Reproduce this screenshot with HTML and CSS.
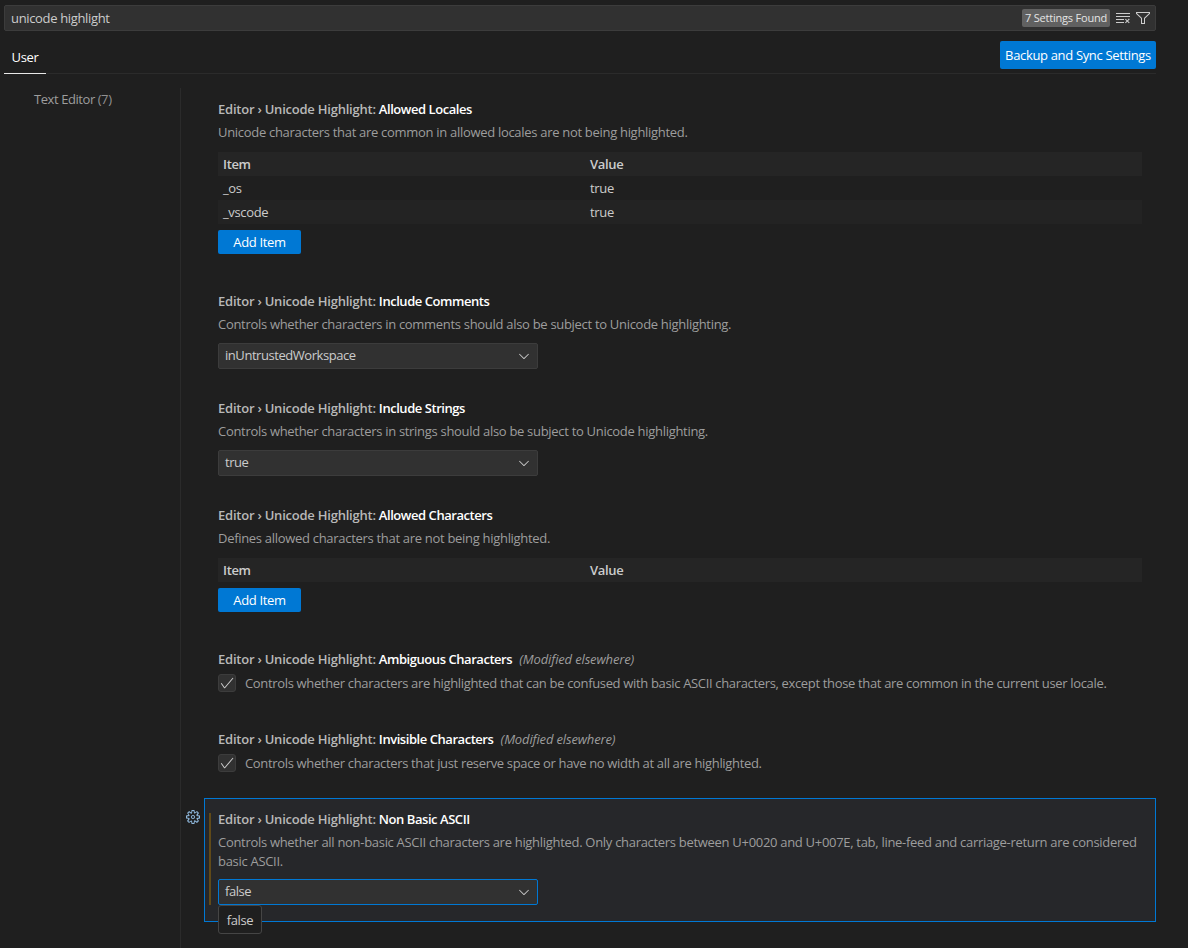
FILE: index.html
```html
<!DOCTYPE html>
<html lang="en">
<head>
    <meta charset="UTF-8">
    <title>Settings</title>
    <link rel="stylesheet" href="styles.css">
</head>
<body>
    <div class="search-box">
        <span class="search-text">unicode highlight</span>
        <span class="count-badge">7 Settings Found</span>
        <svg class="search-icon" viewBox="0 0 16 16"><path d="M10 12.6l.7.7 1.6-1.6 1.6 1.6.8-.7L13 11l1.7-1.6-.8-.8-1.6 1.7-1.6-1.6-.7.7 1.6 1.6-1.6 1.6zM1 4h14V3H1v1zm0 3h14V6H1v1zm8 2.5V9H1v1h8v-.5zM9 13v-1H1v1h8z"/></svg>
        <svg class="search-icon" viewBox="0 0 16 16"><path d="M15 2v1.67l-5 4.759V14H6V8.429l-5-4.76V2h14zM7 8v5h2V8l5-4.76V3H2v.24L7 8z"/></svg>
    </div>

    <div class="tabs">
        <div class="tab">User</div>
        <button class="sync-btn">Backup and Sync Settings</button>
    </div>

    <div class="content">
        <div class="toc">Text Editor <span class="toc-count">(7)</span></div>
        <div class="settings">

            <div class="setting setting-list">
                <div class="setting-title">Editor › Unicode Highlight: <b>Allowed Locales</b></div>
                <div class="setting-desc">Unicode characters that are common in allowed locales are not being highlighted.</div>
                <div class="list-row list-head"><span class="list-key">Item</span><span>Value</span></div>
                <div class="list-row"><span class="list-key">_os</span><span>true</span></div>
                <div class="list-row list-row-alt"><span class="list-key">_vscode</span><span>true</span></div>
                <button class="add-btn">Add Item</button>
            </div>

            <div class="setting">
                <div class="setting-title">Editor › Unicode Highlight: <b>Include Comments</b></div>
                <div class="setting-desc">Controls whether characters in comments should also be subject to Unicode highlighting.</div>
                <div class="select">
                    <span>inUntrustedWorkspace</span>
                    <svg class="chevron" viewBox="0 0 16 16"><path d="M7.976 10.072l4.357-4.357.62.618L8.284 11h-.618L3 6.333l.619-.618 4.357 4.357z"/></svg>
                </div>
            </div>

            <div class="setting">
                <div class="setting-title">Editor › Unicode Highlight: <b>Include Strings</b></div>
                <div class="setting-desc">Controls whether characters in strings should also be subject to Unicode highlighting.</div>
                <div class="select">
                    <span>true</span>
                    <svg class="chevron" viewBox="0 0 16 16"><path d="M7.976 10.072l4.357-4.357.62.618L8.284 11h-.618L3 6.333l.619-.618 4.357 4.357z"/></svg>
                </div>
            </div>

            <div class="setting setting-list">
                <div class="setting-title">Editor › Unicode Highlight: <b>Allowed Characters</b></div>
                <div class="setting-desc">Defines allowed characters that are not being highlighted.</div>
                <div class="list-row list-head"><span class="list-key">Item</span><span>Value</span></div>
                <button class="add-btn">Add Item</button>
            </div>

            <div class="setting setting-bool">
                <div class="setting-title">Editor › Unicode Highlight: <b>Ambiguous Characters</b> <i class="modified">(Modified elsewhere)</i></div>
                <div class="check-row">
                    <div class="checkbox"><svg viewBox="0 0 16 16"><path d="M14.431 3.323l-8.47 10-.79-.036-3.35-4.77.818-.574 2.978 4.24 8.051-9.506.764.646z"/></svg></div>
                    <div class="setting-desc">Controls whether characters are highlighted that can be confused with basic ASCII characters, except those that are common in the current user locale.</div>
                </div>
            </div>

            <div class="setting setting-bool">
                <div class="setting-title">Editor › Unicode Highlight: <b>Invisible Characters</b> <i class="modified">(Modified elsewhere)</i></div>
                <div class="check-row">
                    <div class="checkbox"><svg viewBox="0 0 16 16"><path d="M14.431 3.323l-8.47 10-.79-.036-3.35-4.77.818-.574 2.978 4.24 8.051-9.506.764.646z"/></svg></div>
                    <div class="setting-desc">Controls whether characters that just reserve space or have no width at all are highlighted.</div>
                </div>
            </div>

            <div class="setting setting-focused">
                <svg class="gear" viewBox="0 0 16 16"><path fill-rule="evenodd" d="M9.1 4.4L8.6 2H7.4l-.5 2.4-.7.3-2-1.3-.9.8 1.3 2-.2.7-2.4.5v1.2l2.4.5.3.8-1.3 2 .8.8 2-1.3.8.3.4 2.3h1.2l.5-2.4.8-.3 2 1.3.8-.8-1.3-2 .3-.8 2.3-.4V7.4l-2.4-.5-.3-.8 1.3-2-.8-.8-2 1.3-.7-.2zM9.4 1l.5 2.4L12 2.1l2 2-1.4 2.1 2.4.4v2.8l-2.4.5L14 12l-2 2-2.1-1.4-.5 2.4H6.6l-.5-2.4L4 13.9l-2-2 1.4-2.1L1 9.4V6.6l2.4-.5L2.1 4l2-2 2.1 1.4.4-2.4h2.8zm.6 7c0 1.1-.9 2-2 2s-2-.9-2-2 .9-2 2-2 2 .9 2 2zM8 9c.6 0 1-.4 1-1s-.4-1-1-1-1 .4-1 1 .4 1 1 1z"/></svg>
                <div class="modified-bar"></div>
                <div class="setting-title">Editor › Unicode Highlight: <b>Non Basic ASCII</b></div>
                <div class="setting-desc">Controls whether all non-basic ASCII characters are highlighted. Only characters between U+0020 and U+007E, tab, line-feed and carriage-return are considered basic ASCII.</div>
                <div class="select select-focused">
                    <span>false</span>
                    <svg class="chevron" viewBox="0 0 16 16"><path d="M7.976 10.072l4.357-4.357.62.618L8.284 11h-.618L3 6.333l.619-.618 4.357 4.357z"/></svg>
                </div>
                <div class="hover-tip">false</div>
            </div>

        </div>
    </div>
</body>
</html>
```

FILE: styles.css
```css
:root {
    --bg-color: #1f1f1f;
    --text-color: #cccccc;
    --desc-color: #9d9d9d;
    --accent-color: #0078d4;
    --input-bg: #313131;
    --input-border: #3c3c3c;
}

body {
    margin: 0;
    height: 948px;
    overflow: hidden;
    background-color: var(--bg-color);
    color: var(--text-color);
    font-family: "Open Sans", "Noto Sans", sans-serif;
    font-size: 13px;
    letter-spacing: -0.34px;
}

.search-box {
    display: flex;
    align-items: center;
    box-sizing: border-box;
    width: 1152px;
    height: 26px;
    margin: 5px 0 0 4px;
    padding: 0 4px 0 6px;
    background-color: #313131;
    border: 1px solid #3c3c3c;
    border-radius: 2px;
}

.search-text {
    flex: 1;
}

.count-badge {
    height: 18px;
    line-height: 18px;
    padding: 0 3px;
    margin-right: 1px;
    font-size: 11px;
    color: #e4e4e4;
    background-color: #616161;
    border-radius: 2px;
    letter-spacing: -0.2px;
}

.search-icon {
    width: 16px;
    height: 16px;
    margin-left: 4px;
    fill: #cccccc;
}

.tabs {
    display: flex;
    justify-content: space-between;
    width: 1152px;
    height: 42px;
    margin-left: 4px;
    border-bottom: 1px solid #2b2b2b;
}

.tab {
    align-self: flex-end;
    width: 42px;
    height: 33px;
    line-height: 34px;
    margin-bottom: -1px;
    text-align: center;
    color: #ffffff;
    border-bottom: 1px solid #e8e8e8;
}

.sync-btn {
    height: 28px;
    width: 156px;
    margin-top: 10px;
    padding: 0;
    font-family: inherit;
    font-size: 13px;
    letter-spacing: -0.34px;
    color: #ffffff;
    background-color: var(--accent-color);
    border: none;
    border-radius: 2px;
}

.content {
    display: flex;
    width: 1156px;
    height: 860px;
    margin-top: 14px;
}

.toc {
    width: 146px;
    margin-left: 34px;
    padding-top: 2px;
    line-height: 18px;
    color: #9d9d9d;
    letter-spacing: -0.43px;
}

.toc-count {
    opacity: 0.9;
}

.settings {
    flex: 1;
    padding-left: 24px;
    border-left: 1px solid #2b2b2b;
}

.setting {
    position: relative;
    padding: 12px 14px 18px 14px;
    margin-left: -1px;
}

.setting-list,
.setting-bool {
    padding-bottom: 26px;
}

.setting-title {
    height: 18px;
    line-height: 18px;
    margin-bottom: 5px;
    font-weight: 600;
    color: #b8b8b8;
    letter-spacing: -0.23px;
}

.setting-title b {
    font-weight: 600;
    color: #ffffff;
    letter-spacing: -0.45px;
}

.modified {
    margin-left: 4px;
    font-weight: 400;
    color: #9d9d9d;
    letter-spacing: -0.15px;
}

.setting-desc {
    line-height: 19px;
    color: var(--desc-color);
    letter-spacing: -0.3px;
}

.list-row {
    display: flex;
    height: 24px;
    line-height: 24px;
    padding-left: 5px;
    color: var(--text-color);
}

.setting-desc + .list-row {
    margin-top: 10px;
}

.list-head {
    font-weight: 600;
    background-color: #252525;
}

.list-row-alt {
    background-color: #232323;
}

.list-key {
    width: 367px;
}

.add-btn {
    display: block;
    width: 83px;
    height: 24px;
    margin-top: 6px;
    padding: 0;
    font-family: inherit;
    font-size: 13px;
    letter-spacing: -0.34px;
    color: #ffffff;
    background-color: var(--accent-color);
    border: none;
    border-radius: 2px;
}

.select {
    display: flex;
    align-items: center;
    justify-content: space-between;
    box-sizing: border-box;
    width: 320px;
    height: 26px;
    margin-top: 9px;
    padding: 0 5px 0 6px;
    background-color: var(--input-bg);
    border: 1px solid var(--input-border);
    border-radius: 2px;
    letter-spacing: -0.45px;
}

.select span {
    padding-bottom: 2px;
}

.select-focused {
    margin-top: 8px;
    border-color: var(--accent-color);
}

.chevron {
    width: 16px;
    height: 16px;
    fill: #cccccc;
}

.check-row {
    display: flex;
    align-items: center;
    gap: 9px;
    height: 18px;
    margin-top: 6px;
}

.check-row .setting-desc {
    letter-spacing: -0.34px;
}

.checkbox {
    box-sizing: border-box;
    width: 18px;
    height: 18px;
    background-color: var(--input-bg);
    border: 1px solid var(--input-border);
    border-radius: 3px;
}

.checkbox svg {
    display: block;
    width: 16px;
    height: 16px;
    fill: #cccccc;
}

.setting-focused {
    background-color: #26272a;
    outline: 1px solid var(--accent-color);
    outline-offset: -1px;
    padding-bottom: 17px;
}

.gear {
    position: absolute;
    left: -19px;
    top: 11px;
    width: 16px;
    height: 16px;
    fill: #8fb8dc;
}

.modified-bar {
    position: absolute;
    left: 5px;
    top: 15px;
    bottom: 17px;
    width: 2px;
    background-color: #614a18;
}

.hover-tip {
    position: absolute;
    left: 14px;
    top: 107px;
    box-sizing: border-box;
    width: 44px;
    height: 29px;
    line-height: 29px;
    text-align: center;
    background-color: #1f1f1f;
    border: 1px solid #454545;
    border-radius: 3px;
}
```
